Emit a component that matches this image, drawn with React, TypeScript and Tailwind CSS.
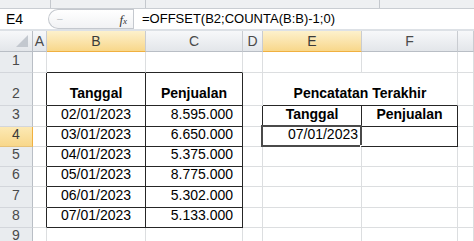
import React from "react";

const FONT = { fontFamily: '"Liberation Sans", Arial, sans-serif' };

type CellDef = {
  key: string;
  text?: string;
  align?: "center" | "right" | "left";
  bold?: boolean;
  rb: boolean; // black right border
  bb: boolean; // black bottom border
  span2?: boolean;
  selected?: boolean;
};

const colLetters = ["A", "B", "C", "D", "E", "F", ""];

function HeaderCell({ label, sel }: { label: string; sel: boolean }) {
  return (
    <div
      className={
        sel
          ? "flex items-center justify-center border-r border-b border-r-[#c9ccd1] border-b-[#f0b040] bg-gradient-to-b from-[#fdf1cc] to-[#f8d78a] text-[14px] text-[#3a3a3a]"
          : "flex items-center justify-center border-r border-b border-r-[#c9ccd1] border-b-[#b9bec5] bg-gradient-to-b from-[#f7f8fa] to-[#e3e6ea] text-[14px] text-[#4a4a4a]"
      }
    >
      {label}
    </div>
  );
}

function RowHeader({ n, sel }: { n: number; sel: boolean }) {
  return (
    <div
      className={
        sel
          ? "flex items-end justify-center pb-[1px] border-r border-b border-r-[#f0b040] border-b-[#e6c27a] bg-gradient-to-b from-[#fce9b4] to-[#f8d78a] text-[14px] text-[#3a3a3a]"
          : "flex items-end justify-center pb-[1px] border-r border-b border-r-[#b9bec5] border-b-[#d3d6db] bg-[#e9ecef] text-[14px] text-[#4a4a4a]"
      }
    >
      {n}
    </div>
  );
}

function Cell({ c }: { c: CellDef }) {
  const rbc = c.rb ? "border-r-[#262626]" : "border-r-[#dcdee0]";
  const bbc = c.bb ? "border-b-[#262626]" : "border-b-[#dcdee0]";
  const just =
    c.align === "right"
      ? c.selected
        ? "justify-end pr-[3px]"
        : "justify-end pr-[9px]"
      : c.align === "center"
      ? "justify-center"
      : "justify-start pl-[3px]";
  return (
    <div
      className={`relative flex items-end pb-[1px] border-r border-b bg-white text-[14px] text-black ${rbc} ${bbc} ${just} ${
        c.bold ? "font-bold" : ""
      } ${c.span2 ? "col-span-2" : ""}`}
    >
      {c.text}
      {c.selected ? (
        <>
          <div className="absolute left-[-2px] top-[-2px] right-[-1px] bottom-[-1px] border-2 border-[#4a4a4a]" />
          <div className="absolute right-[-4px] bottom-[-4px] h-[5px] w-[5px] bg-[#4a4a4a] border border-white" />
        </>
      ) : null}
    </div>
  );
}

export default function App() {
  const dates = ["02/01/2023", "03/01/2023", "04/01/2023", "05/01/2023", "06/01/2023", "07/01/2023"];
  const sales = ["8.595.000", "6.650.000", "5.375.000", "8.775.000", "5.302.000", "5.133.000"];

  const rows: CellDef[][] = [];
  for (let r = 1; r <= 9; r++) {
    const row: CellDef[] = [];
    row.push({ key: "A", rb: r >= 2 && r <= 8, bb: false });
    row.push({
      key: "B",
      text: r === 2 ? "Tanggal" : r >= 3 && r <= 8 ? dates[r - 3] : undefined,
      align: "center",
      bold: r === 2,
      rb: r >= 2 && r <= 8,
      bb: r >= 1 && r <= 8,
    });
    row.push({
      key: "C",
      text: r === 2 ? "Penjualan" : r >= 3 && r <= 8 ? sales[r - 3] : undefined,
      align: r === 2 ? "center" : "right",
      bold: r === 2,
      rb: r >= 2 && r <= 8,
      bb: r >= 1 && r <= 8,
    });
    row.push({ key: "D", rb: r >= 3 && r <= 4, bb: false });
    if (r === 2) {
      row.push({
        key: "EF",
        text: "Pencatatan Terakhir",
        align: "center",
        bold: true,
        rb: false,
        bb: true,
        span2: true,
      });
    } else {
      row.push({
        key: "E",
        text: r === 3 ? "Tanggal" : r === 4 ? "07/01/2023" : undefined,
        align: r === 4 ? "right" : "center",
        bold: r === 3,
        rb: r >= 3 && r <= 4,
        bb: r >= 3 && r <= 4,
        selected: r === 4,
      });
      row.push({
        key: "F",
        text: r === 3 ? "Penjualan" : undefined,
        align: "center",
        bold: r === 3,
        rb: r >= 3 && r <= 4,
        bb: r >= 3 && r <= 4,
      });
    }
    row.push({ key: "G", rb: false, bb: false });
    rows.push(row);
  }

  return (
    <div className="w-[474px] h-[241px] overflow-hidden bg-white" style={FONT}>
      {/* ribbon remnant */}
      <div className="relative h-[9px] bg-[#eef0f2] border-b border-[#c9cdd2]">
        <div className="absolute left-[50px] top-0 h-[8px] w-px bg-[#c4c8cd]" />
        <div className="absolute left-[145px] top-0 h-[8px] w-px bg-[#c4c8cd]" />
        <div className="absolute left-[379px] top-0 h-[8px] w-px bg-[#c4c8cd]" />
      </div>
      {/* formula bar */}
      <div className="flex h-[20px] bg-white">
        <div className="w-[48px] flex items-center pl-[6px] text-[14px] text-black">E4</div>
        <div className="w-[85px] flex items-center justify-between rounded-l-full border border-r-0 border-[#c4c8ce] bg-gradient-to-b from-white to-[#f1f2f4] pl-[8px] pr-[6px]">
          <span className="text-[10px] leading-none text-[#c0c4c9]">–</span>
          <span
            className="text-[13px] italic text-[#333] leading-none"
            style={{ fontFamily: '"Liberation Serif", serif' }}
          >
            f<span className="text-[9px]">x</span>
          </span>
        </div>
        <div className="flex-1 flex items-center border-l border-[#c5c9cf] pl-[8px] text-[13px] text-black">
          =OFFSET(B2;COUNTA(B:B)-1;0)
        </div>
      </div>
      <div className="h-[2px] bg-[#dde1e6]" />
      {/* grid */}
      <div className="grid grid-cols-[33px_14px_99px_97px_20px_99px_96px_16px] grid-rows-[21px_21px_33px_21px_20px_20px_20px_21px_20px_20px]">
        <div className="relative border-r border-b border-r-[#b9bec5] border-b-[#b9bec5] bg-gradient-to-b from-[#f7f8fa] to-[#e3e6ea]">
          <svg className="absolute right-[4px] bottom-[4px]" width="12" height="12" viewBox="0 0 12 12">
            <polygon points="12,0 12,12 0,12" fill="#c3c8cf" />
          </svg>
        </div>
        {colLetters.map((l, i) => (
          <HeaderCell key={"h" + i} label={l} sel={l === "B" || l === "E"} />
        ))}
        {rows.map((row, ri) => (
          <React.Fragment key={"r" + ri}>
            <RowHeader n={ri + 1} sel={ri + 1 === 4} />
            {row.map((c) => (
              <Cell key={c.key + ri} c={c} />
            ))}
          </React.Fragment>
        ))}
      </div>
    </div>
  );
}
